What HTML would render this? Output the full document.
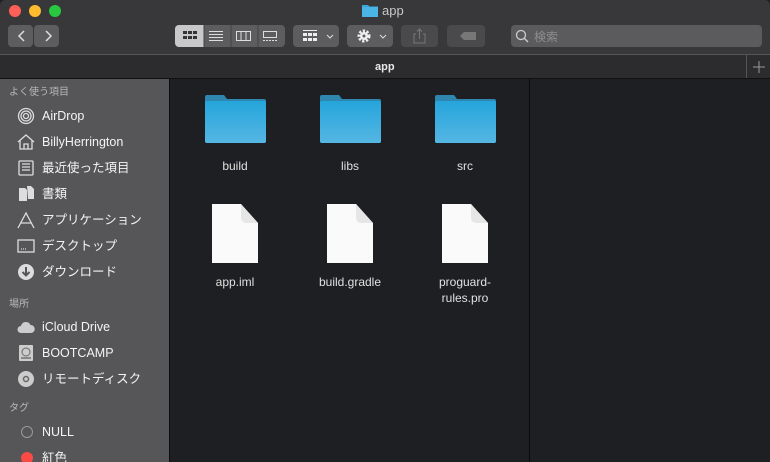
<!DOCTYPE html><html><head><meta charset="utf-8"><style>
*{margin:0;padding:0;box-sizing:border-box}
body{width:770px;height:462px;overflow:hidden;background:#1e1f22;font-family:"Liberation Sans","Noto Sans CJK JP",sans-serif;position:relative}
.abs{position:absolute}
#top{left:0;top:0;width:770px;height:54px;background:#38383a;border-radius:5px 5px 0 0}
#tabs{left:0;top:54px;width:770px;height:25px;background:#2c2c2e;border-top:1px solid #565658;border-bottom:1px solid #111}
.dot{width:12px;height:12px;border-radius:50%;top:5px}
.btn{background:#5d5d60;border-radius:4px;height:22px;top:25px}
#side{left:0;top:79px;width:170px;height:383px;background:#565659;border-right:1px solid #0c0c0c;overflow:hidden}
.h{position:absolute;left:9px;font-size:10px;color:#b8b8ba;line-height:12px}
.it{position:absolute;left:42px;font-size:12.5px;color:#f4f4f4;line-height:16px;height:16px;white-space:nowrap}
.ic{position:absolute;left:17px;width:18px;height:18px}
.lbl{position:absolute;color:#e0e0e0;font-size:12px;text-align:center;width:100px;line-height:16px}
</style></head><body>
<div id="top" class="abs"></div>
<div class="abs dot" style="left:9px;background:#fe5f57"></div>
<div class="abs dot" style="left:29px;background:#febc2e"></div>
<div class="abs dot" style="left:49px;background:#28c840"></div>
<svg class="abs" style="left:362px;top:4px" width="16" height="13"><path d="M0 1h6l1.5 1.5H16V13H0z" fill="#3aa7dc"/><rect y="3" width="16" height="10" fill="#4bb4e6"/></svg>
<div class="abs" style="left:382px;top:3px;color:#c8c8c8;font-size:13px">app</div>
<div class="abs btn" style="left:8px;width:25px"></div>
<div class="abs btn" style="left:34px;width:25px"></div>
<svg class="abs" style="left:8px;top:25px" width="52" height="22"><path d="M16 6l-5 5 5 5M38 6l5 5-5 5" stroke="#ddd" stroke-width="1.5" fill="none"/></svg>
<div class="abs btn" style="left:175px;width:110px"></div>
<div class="abs btn" style="left:175px;width:29px;background:#c8c8ca;border-radius:4px 0 0 4px"></div>
<svg class="abs" style="left:175px;top:25px" width="110" height="22">
<g fill="#333"><rect x="8" y="6" width="4" height="3"/><rect x="13" y="6" width="4" height="3"/><rect x="18" y="6" width="4" height="3"/><rect x="8" y="11" width="4" height="3"/><rect x="13" y="11" width="4" height="3"/><rect x="18" y="11" width="4" height="3"/></g>
<g stroke="#ddd" fill="none"><path d="M34 6.5h14M34 9.5h14M34 12.5h14M34 15.5h14"/><rect x="61.5" y="6.5" width="14" height="9"/><path d="M66 6.5v9M71 6.5v9"/><rect x="88.5" y="6.5" width="13" height="6"/><path d="M88 15.5h14" stroke-dasharray="2 1"/></g>
<path d="M29 0v22M56 0v22M83 0v22" stroke="#444"/></svg>
<div class="abs btn" style="left:293px;width:46px"></div>
<svg class="abs" style="left:293px;top:25px" width="46" height="22"><g fill="#eee"><rect x="10" y="5" width="14" height="1"/><rect x="10" y="8" width="4" height="3"/><rect x="15" y="8" width="4" height="3"/><rect x="20" y="8" width="4" height="3"/><rect x="10" y="13" width="4" height="3"/><rect x="15" y="13" width="4" height="3"/><rect x="20" y="13" width="4" height="3"/></g><path d="M34 10l3 3 3-3" stroke="#ddd" fill="none"/></svg>
<div class="abs btn" style="left:347px;width:46px"></div>
<svg class="abs" style="left:347px;top:25px" width="46" height="22"><circle cx="17" cy="11" r="5" fill="none" stroke="#eee" stroke-width="3" stroke-dasharray="2.2 1.5"/><circle cx="17" cy="11" r="4" fill="#eee"/><circle cx="17" cy="11" r="1.5" fill="#5d5d60"/><path d="M33 10l3 3 3-3" stroke="#ddd" fill="none"/></svg>
<div class="abs btn" style="left:401px;width:37px;background:#4a4a4d"></div>
<svg class="abs" style="left:401px;top:25px" width="37" height="22"><path d="M15 9h-2v9h11V9h-2M18.5 14V4M16 6.5l2.5-2.5 2.5 2.5" stroke="#777" fill="none"/></svg>
<div class="abs btn" style="left:447px;width:38px;background:#4a4a4d"></div>
<svg class="abs" style="left:447px;top:25px" width="38" height="22"><path d="M13 11l4-4h12v8H17z" fill="#777"/></svg>
<div class="abs btn" style="left:511px;width:251px;background:#5b5b5e"></div>
<svg class="abs" style="left:514px;top:28px" width="16" height="16"><circle cx="7" cy="7" r="4.5" stroke="#ccc" stroke-width="1.3" fill="none"/><path d="M10 10l4 4" stroke="#ccc" stroke-width="1.4"/></svg>
<div class="abs" style="left:534px;top:28px;color:#8e8e90;font-size:12px">検索</div>
<div id="tabs" class="abs"></div>
<div class="abs" style="left:375px;top:61px;color:#e8e8e8;font-size:11px;font-weight:bold">app</div>
<div class="abs" style="left:746px;top:55px;width:1px;height:23px;background:#555"></div>
<svg class="abs" style="left:752px;top:60px" width="14" height="14"><path d="M7 1v12M1 7h12" stroke="#999"/></svg>
<div id="side" class="abs">
<div class="h" style="top:8px">よく使う項目</div>
<svg class="ic" style="top:28px" viewBox="0 0 18 18" fill="none" stroke="#ddd" stroke-width="1.3"><circle cx="9" cy="9" r="7.5"/><circle cx="9" cy="9" r="5"/><circle cx="9" cy="9" r="2.5"/></svg>
<div class="it" style="top:29px">AirDrop</div>
<svg class="ic" style="top:54px" viewBox="0 0 18 18" fill="none" stroke="#ddd" stroke-width="1.3"><path d="M1 9l8-7 8 7M3 7v9h12V7M7 16v-5h4v5"/></svg>
<div class="it" style="top:55px">BillyHerrington</div>
<svg class="ic" style="top:80px" viewBox="0 0 18 18" fill="none" stroke="#ddd" stroke-width="1.3"><rect x="2" y="2" width="14" height="14" rx="1"/><path d="M5 5h8M5 8h8M5 11h8"/></svg>
<div class="it" style="top:81px">最近使った項目</div>
<svg class="ic" style="top:106px" viewBox="0 0 18 18" fill="#ddd"><path d="M2 3h6l2 2v11H2z"/><path d="M10 1h4l3 3v10h-6z"/></svg>
<div class="it" style="top:107px">書類</div>
<svg class="ic" style="top:132px" viewBox="0 0 18 18" fill="none" stroke="#ddd" stroke-width="1.3"><path d="M1 17L9 2l8 15M4 12h10"/></svg>
<div class="it" style="top:133px">アプリケーション</div>
<svg class="ic" style="top:158px" viewBox="0 0 18 18" fill="none" stroke="#ddd" stroke-width="1.3"><rect x="1" y="3" width="16" height="12"/><path d="M4 12h6" stroke-dasharray="1 1"/></svg>
<div class="it" style="top:159px">デスクトップ</div>
<svg class="ic" style="top:184px" viewBox="0 0 18 18"><circle cx="9" cy="9" r="8" fill="#ddd"/><path d="M9 4v8M5.5 9L9 12.5 12.5 9" stroke="#565659" stroke-width="2" fill="none"/></svg>
<div class="it" style="top:185px">ダウンロード</div>
<div class="h" style="top:220px">場所</div>
<svg class="ic" style="top:239px" viewBox="0 0 18 18"><path d="M4 15a3.5 3.5 0 010-7 5 5 0 019.5-1A4 4 0 0114 15z" fill="#ccc"/></svg>
<div class="it" style="top:240px">iCloud Drive</div>
<svg class="ic" style="top:265px" viewBox="0 0 18 18"><rect x="2" y="1" width="14" height="16" rx="1" fill="#ccc"/><circle cx="9" cy="8" r="4" fill="none" stroke="#666"/><rect x="4" y="13" width="10" height="2" fill="#888"/></svg>
<div class="it" style="top:266px">BOOTCAMP</div>
<svg class="ic" style="top:291px" viewBox="0 0 18 18"><circle cx="9" cy="9" r="8" fill="#ccc"/><circle cx="9" cy="9" r="2.5" fill="none" stroke="#666" stroke-width="1.5"/></svg>
<div class="it" style="top:292px">リモートディスク</div>
<div class="h" style="top:324px">タグ</div>
<div class="abs" style="left:21px;top:347px;width:12px;height:12px;border-radius:50%;border:1px solid #999"></div>
<div class="it" style="top:345px">NULL</div>
<div class="abs" style="left:21px;top:373px;width:12px;height:12px;border-radius:50%;background:#fe4a45"></div>
<div class="it" style="top:371px">紅色</div>
</div>
<div class="abs" style="left:529px;top:79px;width:1px;height:383px;background:#0a0a0a"></div>
<svg width="0" height="0" style="position:absolute"><defs>
<linearGradient id="fg" x1="0" y1="0" x2="0" y2="1"><stop offset="0" stop-color="#25a5dc"/><stop offset="1" stop-color="#55b6e3"/></linearGradient></defs></svg>
<svg class="abs" style="left:205px;top:95px" width="61" height="48"><path d="M0 2a2 2 0 012-2h17l3 4h37a2 2 0 012 2v40a2 2 0 01-2 2H2a2 2 0 01-2-2z" fill="#2f87b0"/><path d="M0 8a2 2 0 012-2h57a2 2 0 012 2v38a2 2 0 01-2 2H2a2 2 0 01-2-2z" fill="url(#fg)"/></svg>
<svg class="abs" style="left:320px;top:95px" width="61" height="48"><path d="M0 2a2 2 0 012-2h17l3 4h37a2 2 0 012 2v40a2 2 0 01-2 2H2a2 2 0 01-2-2z" fill="#2f87b0"/><path d="M0 8a2 2 0 012-2h57a2 2 0 012 2v38a2 2 0 01-2 2H2a2 2 0 01-2-2z" fill="url(#fg)"/></svg>
<svg class="abs" style="left:435px;top:95px" width="61" height="48"><path d="M0 2a2 2 0 012-2h17l3 4h37a2 2 0 012 2v40a2 2 0 01-2 2H2a2 2 0 01-2-2z" fill="#2f87b0"/><path d="M0 8a2 2 0 012-2h57a2 2 0 012 2v38a2 2 0 01-2 2H2a2 2 0 01-2-2z" fill="url(#fg)"/></svg>
<div class="lbl" style="left:185px;top:158px">build</div>
<div class="lbl" style="left:300px;top:158px">libs</div>
<div class="lbl" style="left:415px;top:158px">src</div>
<svg class="abs" style="left:212px;top:204px" width="46" height="59"><path d="M0 0h29l17 19v40H0z" fill="#fafafa"/><path d="M29 0v14a5 5 0 005 5h12" fill="#e6e6e6"/></svg>
<svg class="abs" style="left:327px;top:204px" width="46" height="59"><path d="M0 0h29l17 19v40H0z" fill="#fafafa"/><path d="M29 0v14a5 5 0 005 5h12" fill="#e6e6e6"/></svg>
<svg class="abs" style="left:442px;top:204px" width="46" height="59"><path d="M0 0h29l17 19v40H0z" fill="#fafafa"/><path d="M29 0v14a5 5 0 005 5h12" fill="#e6e6e6"/></svg>
<div class="lbl" style="left:185px;top:274px">app.iml</div>
<div class="lbl" style="left:300px;top:274px">build.gradle</div>
<div class="lbl" style="left:415px;top:274px">proguard-<br>rules.pro</div>
</body></html>
